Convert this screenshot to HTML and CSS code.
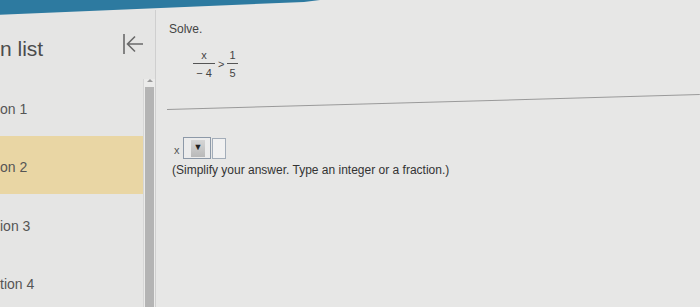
FILE: index.html
```html
<!DOCTYPE html>
<html>
<head>
<meta charset="utf-8">
<link rel="stylesheet" href="styles.css">
</head>
<body>
<div class="topbar"></div>
<div class="page">
  <aside class="sidebar">
    <div class="side-head">
      <span class="side-title">n list</span>
      <svg class="collapse" width="22" height="22" viewBox="0 0 22 22">
        <path d="M2 1 V21 M21 11 H6 M13 3.5 L5.5 11 L13 18.5" fill="none" stroke="#6a6a6a" stroke-width="1.6"/>
      </svg>
    </div>
    <div class="side-body">
      <ul class="items">
        <li class="item">on 1</li>
        <li class="item active">on 2</li>
        <li class="item">ion 3</li>
        <li class="item">tion 4</li>
      </ul>
      <div class="scroll">
        <div class="arrow"></div>
        <div class="thumb"></div>
      </div>
    </div>
  </aside>
  <main class="main">
    <div class="solve">Solve.</div>
    <div class="eq">
      <div class="frac"><span class="num">x</span><span class="den">− 4</span></div>
      <span class="gt">&gt;</span>
      <div class="frac"><span class="num">1</span><span class="den">5</span></div>
    </div>
    <hr class="rule">
    <div class="answer">
      <span class="var">x</span>
      <span class="select"><span class="btn">▼</span></span>
      <span class="box"></span>
    </div>
    <div class="hint">(Simplify your answer. Type an integer or a fraction.)</div>
  </main>
</div>
</body>
</html>
```

FILE: styles.css
```css
* { box-sizing: border-box; }
html, body { margin: 0; padding: 0; }
body {
  width: 700px;
  height: 307px;
  overflow: hidden;
  background: #e7e7e6;
  font-family: "Liberation Sans", Arial, sans-serif;
  position: relative;
}
.topbar {
  position: absolute;
  top: 0; left: 0;
  width: 320px;
  height: 16px;
  background: #2d7aa0;
  clip-path: polygon(0 0, 100% 0, 95% 12%, 0 92%);
}
.page {
  display: flex;
  height: 307px;
  padding-top: 10px;
}
.sidebar {
  width: 156px;
  display: flex;
  flex-direction: column;
  background: #e5e5e4;
  border-right: 1px solid #cfcfcf;
  overflow: hidden;
}
.side-head {
  flex-shrink: 0;
  height: 69px;
  display: flex;
  align-items: center;
  justify-content: space-between;
  padding: 2px 11px 0 0;
}
.side-title {
  font-size: 21px;
  color: #4c4c4c;
  margin-top: 6px;
}
.collapse { margin-top: -4px; }
.side-body {
  flex: 1;
  min-height: 0;
  display: flex;
}
.items {
  list-style: none;
  margin: 0;
  padding: 0;
  flex: 1;
}
.item {
  height: 59px;
  display: flex;
  align-items: center;
  font-size: 14px;
  color: #555;
}
.item.active {
  background: #e9d6a4;
  margin-right: -2px;
  margin-top: -2px;
  padding-top: 4px;
  height: 58px;
}
.active + .item { margin-top: 3px; height: 57px; }
.scroll {
  width: 12px;
  background: #ebebea;
  border-left: 1px solid #d6d6d6;
  display: flex;
  flex-direction: column;
  align-items: center;
  padding-top: 0;
}
.arrow {
  width: 0; height: 0;
  border-left: 3px solid transparent;
  border-right: 3px solid transparent;
  border-bottom: 3px solid #999;
  margin-bottom: 5px;
}
.thumb {
  flex: 1;
  width: 9px;
  background: #b4b4b4;
}
.main {
  flex: 1;
  padding: 12px 0 0 13px;
  color: #333;
}
.solve {
  font-size: 12px;
  color: #444;
}
.eq {
  display: flex;
  align-items: center;
  margin: 13px 0 0 24px;
  font-size: 11px;
  color: #444;
}
.frac {
  display: flex;
  flex-direction: column;
  align-items: center;
}
.frac .num { padding: 0 2px 2px; line-height: 12px; }
.frac .den { border-top: 1px solid #555; padding: 3px 2px 0; line-height: 12px; }
.frac:first-child .num, .frac:first-child .den { padding-left: 3px; padding-right: 3px; }
.frac:first-child .den { min-width: 22px; text-align: center; }
.gt { margin: 0 3px; font-size: 11px; }
.rule {
  border: 0;
  border-top: 1px solid #9a9a9a;
  margin: 30px 0 0 -2px;
  height: 0;
  transform: rotate(-1.6deg);
  transform-origin: left center;
}
.answer {
  display: flex;
  align-items: center;
  margin: 27px 0 0 5px;
  height: 22px;
}
.var {
  font-size: 11px;
  color: #555;
  margin-right: 3px;
  margin-top: 4px;
}
.select {
  width: 28px;
  height: 22px;
  border: 1px solid #8d99a8;
  background: #ececec;
  display: flex;
  align-items: flex-start;
  justify-content: center;
  padding-top: 2px;
  padding-left: 3px;
}
.btn {
  width: 14px;
  height: 17px;
  background: linear-gradient(#d6d6d6, #b9b9b9);
  font-size: 9px;
  line-height: 14px;
  text-align: center;
  color: #222;
}
.box {
  width: 14px;
  height: 21px;
  border: 1px solid #a3adb9;
  background: #f1f1f1;
  margin-left: 1px;
}
.hint {
  margin-top: 4px;
  font-size: 12px;
  color: #333;
  margin-left: 3px;
}
```
